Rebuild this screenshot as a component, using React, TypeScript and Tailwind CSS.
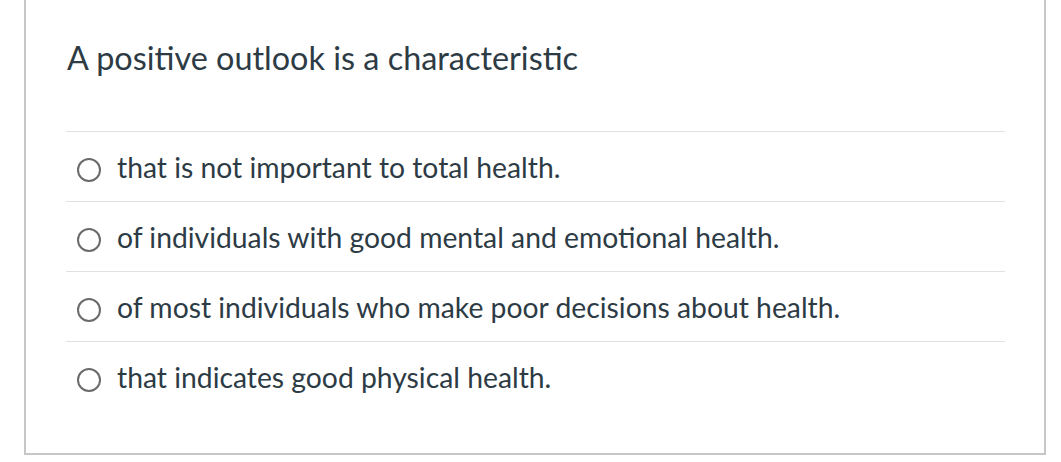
const answers = [
  'that is not important to total health.',
  'of individuals with good mental and emotional health.',
  'of most individuals who make poor decisions about health.',
  'that indicates good physical health.',
];

export default function App() {
  return (
    <div className="w-[1061px] h-[462px] bg-white" style={{ fontFamily: 'Lato, "Open Sans", sans-serif' }}>
      <div className="ml-[24px] w-[1022px] h-[455px] border-x-2 border-b-2 border-[#c7c7c7] text-[#2d3b45]">
        <div className="pl-[41px] pr-[40px] pt-[38px] h-[131px]">
          <h1 className="text-[32.4px] leading-[40px]">A positive outlook is a characteristic</h1>
        </div>
        <div className="ml-[40px] mr-[39px]">
          {answers.map((a) => (
            <div key={a} className="h-[70px] border-t border-[#dfe2e4] flex items-start pt-[19px]">
              <span className="ml-[11px] mt-[7px] w-[24px] h-[24px] rounded-full border-2 border-[#6b6b6b] shrink-0" />
              <span className="ml-[16px] text-[28.3px] leading-[32px]">{a}</span>
            </div>
          ))}
        </div>
      </div>
    </div>
  );
}
